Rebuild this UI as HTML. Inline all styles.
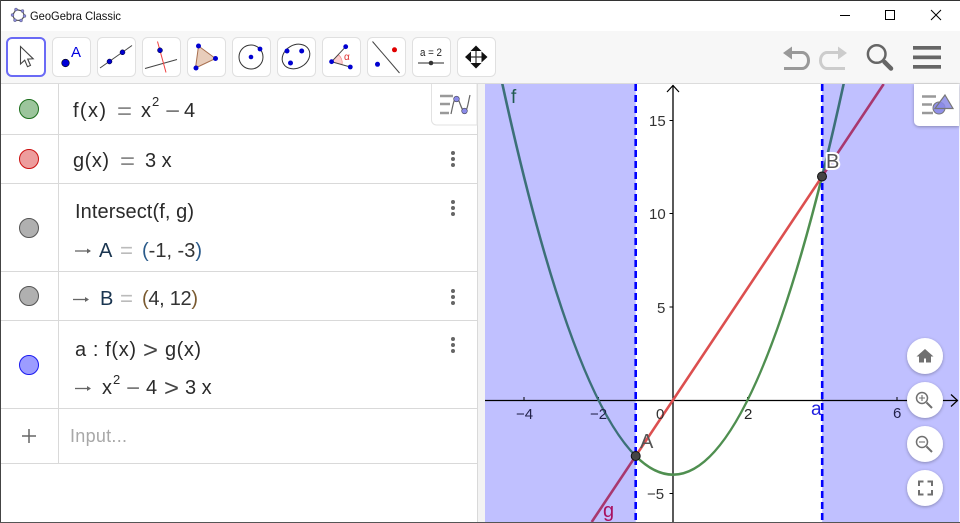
<!DOCTYPE html>
<html><head><meta charset="utf-8"><style>
html,body{margin:0;padding:0;background:#fff;width:960px;height:523px;overflow:hidden}
svg{display:block;position:absolute;left:0;top:0;overflow:hidden}
text{font-family:"Liberation Sans",sans-serif}
.m{font-size:20px;fill:#2a2a2a}
</style></head><body>
<svg width="960" height="523" viewBox="0 0 960 523" xmlns="http://www.w3.org/2000/svg">
<defs>
<clipPath id="in"><rect x="635.7" y="84" width="186.5" height="438"/></clipPath>
<clipPath id="out"><rect x="485" y="84" width="150.7" height="438"/><rect x="822.2" y="84" width="137" height="438"/></clipPath>
<filter id="sh" x="-30%" y="-30%" width="160%" height="160%"><feDropShadow dx="0" dy="1" stdDeviation="1.5" flood-color="#000" flood-opacity=".3"/></filter>
</defs>
<rect width="960" height="523" fill="#fff"/>
<!-- title bar -->
<path d="M16 9.500l6.500 1.500 2 5-3.500 4.500-6-.3-2.500-5z" fill="none" stroke="#555" stroke-width="1.200"/>
<g fill="#8a8ad8" stroke="#446" stroke-width=".4"><circle cx="16" cy="9.500" r="1.500"/><circle cx="22.500" cy="11" r="1.500"/><circle cx="24.500" cy="16" r="1.500"/><circle cx="21" cy="20.500" r="1.500"/><circle cx="15" cy="20.200" r="1.500"/><circle cx="12.500" cy="15" r="1.500"/></g>
<text x="30" y="20" font-size="12" fill="#111" textLength="91" lengthAdjust="spacingAndGlyphs">GeoGebra Classic</text>
<path d="M840 15.500h10" stroke="#000"/>
<rect x="885.500" y="10.500" width="9" height="9" fill="none" stroke="#000"/>
<path d="M931 10l10 10M941 10l-10 10" stroke="#000" fill="none"/>
<!-- toolbar -->
<rect x="0" y="31" width="960" height="52" fill="#f7f7f7"/>
<rect x="0" y="83" width="960" height="1" fill="#dcdcdc"/>
<g fill="#fff" stroke="#e0e0e0">
<rect x="52.500" y="37.500" width="38" height="39" rx="5"/><rect x="97.500" y="37.500" width="38" height="39" rx="5"/><rect x="142.500" y="37.500" width="38" height="39" rx="5"/><rect x="187.500" y="37.500" width="38" height="39" rx="5"/><rect x="232.500" y="37.500" width="38" height="39" rx="5"/><rect x="277.500" y="37.500" width="38" height="39" rx="5"/><rect x="322.500" y="37.500" width="38" height="39" rx="5"/><rect x="367.500" y="37.500" width="38" height="39" rx="5"/><rect x="412.500" y="37.500" width="38" height="39" rx="5"/><rect x="457.500" y="37.500" width="38" height="39" rx="5"/>
</g>
<rect x="7" y="38" width="38" height="38" rx="5" fill="#fff" stroke="#6a6af5" stroke-width="2"/>
<path d="M20.500 46.500v17.500l4.200-3.800 2.800 6.500 3-1.300-2.800-6.300 5.500-.3z" fill="#fff" stroke="#444" stroke-width="1.100"/>
<circle cx="65.500" cy="63" r="3.800" fill="#0000d8" stroke="#000" stroke-width=".6"/>
<text x="71" y="57" font-size="15" fill="#0000e0">A</text>
<path d="M100 68l32-22.500" stroke="#444" stroke-width="1"/><circle cx="109.500" cy="61.500" r="2.500" fill="#0000d0" stroke="#002" stroke-width=".5"/><circle cx="122.500" cy="52.300" r="2.500" fill="#0000d0" stroke="#002" stroke-width=".5"/>
<path d="M145 68.500l32-9" stroke="#444" stroke-width="1"/><path d="M157.500 41.500l8.500 31" stroke="#f04040" stroke-width="1"/><circle cx="160" cy="50.300" r="2.500" fill="#0000d0" stroke="#002" stroke-width=".5"/>
<path d="M198.500 46l17 12.500-20 9.500z" fill="#e8cdbb" stroke="#a87050" stroke-width="1"/><circle cx="198.500" cy="46" r="2.500" fill="#0000d0"/><circle cx="215.500" cy="58.500" r="2.500" fill="#0000d0"/><circle cx="196" cy="68" r="2.500" fill="#0000d0"/>
<circle cx="251" cy="57" r="12" fill="none" stroke="#333" stroke-width="1"/><circle cx="251" cy="57" r="2.300" fill="#0000d0"/><circle cx="260" cy="49" r="2.400" fill="#0000d0"/>
<ellipse cx="296" cy="56.500" rx="14.500" ry="11.500" transform="rotate(-30 296 56.500)" fill="none" stroke="#333" stroke-width="1"/><circle cx="287" cy="51" r="2.500" fill="#0000d0"/><circle cx="301.700" cy="51" r="2.500" fill="#0000d0"/><circle cx="290.500" cy="63" r="2.500" fill="#0000d0"/>
<path d="M331.600 61.700L338.500 54.800A10 10 0 0 1 342 64.600z" fill="#fcd0d0" stroke="#f08080" stroke-width=".7"/>
<path d="M345.700 46.700L331.600 61.700 350.300 67" fill="none" stroke="#444" stroke-width="1"/>
<circle cx="345.700" cy="46.700" r="2.400" fill="#0000d0"/><circle cx="331.600" cy="61.700" r="2.400" fill="#0000d0"/><circle cx="350.300" cy="67" r="2.400" fill="#0000d0"/><text x="344" y="60" font-size="10" fill="#e03030">α</text>
<path d="M372.500 41.500l27 31.500" stroke="#444" stroke-width="1"/><circle cx="394.500" cy="49.800" r="2.500" fill="#e00000"/><circle cx="377.500" cy="64.300" r="2.500" fill="#0000d0"/>
<text x="420" y="56" font-size="11" fill="#222" textLength="22" lengthAdjust="spacingAndGlyphs">a = 2</text><path d="M418 63h26" stroke="#555" stroke-width="1.300"/><circle cx="431" cy="63" r="2.300" fill="#333"/>
<path d="M476 47v20M466.500 57h20" stroke="#333" stroke-width="1.200"/><path d="M476 45.500l-5.500 5.500h11zM476 68.500l-5.500-5.500h11zM465 57l6-5.500v11zM487.500 57l-6-5.500v11z" fill="#111"/>
<!-- undo redo search menu -->
<path d="M788 52.500h14a6.500 8 0 0 1 0 16h-18" fill="none" stroke="#999" stroke-width="3"/><path d="M783 53l9-6.500v13z" fill="#999"/>
<path d="M842 52.500h-15a6.500 8 0 0 0 0 16h18" fill="none" stroke="#ccc" stroke-width="3"/><path d="M847 53l-9-6.500v13z" fill="#ccc"/>
<circle cx="876.700" cy="54" r="8.800" fill="none" stroke="#666" stroke-width="2.500"/><path d="M884.500 62l6.500 6.500" stroke="#666" stroke-width="4.500" stroke-linecap="round"/>
<rect x="913" y="46" width="28" height="3.700" fill="#666"/><rect x="913" y="55.500" width="28" height="3.700" fill="#666"/><rect x="913" y="65" width="28" height="3.700" fill="#666"/>
<!-- algebra -->
<g fill="#d9d9d9">
<rect x="1" y="134" width="476" height="1"/><rect x="1" y="183" width="476" height="1"/><rect x="1" y="271" width="476" height="1"/><rect x="1" y="320" width="476" height="1"/><rect x="1" y="408" width="476" height="1"/><rect x="1" y="463" width="476" height="1"/>
<rect x="58" y="84" width="1" height="380"/>
<rect x="477" y="84" width="1" height="438"/>
</g>
<rect x="478" y="84" width="7" height="438" fill="#f3f3f3"/>
<circle cx="29" cy="109" r="9.500" fill="#9cc59c" stroke="#1c6e1c"/>
<circle cx="29" cy="159" r="9.500" fill="#ed9d9d" stroke="#cc1010"/>
<circle cx="29" cy="228" r="9.500" fill="#b0b0b0" stroke="#555"/>
<circle cx="29" cy="296" r="9.500" fill="#b0b0b0" stroke="#555"/>
<circle cx="29" cy="365" r="9.500" fill="#9c9cff" stroke="#1a1af0"/>
<text class="m" x="73" y="117" textLength="33">f(x)</text><text x="117" y="119" font-size="24" fill="#888" textLength="15" lengthAdjust="spacingAndGlyphs">=</text><text class="m" x="141" y="117">x</text><text x="152" y="106" font-size="13" fill="#2a2a2a">2</text><text x="165" y="119" font-size="24" fill="#777" textLength="15" lengthAdjust="spacingAndGlyphs">−</text><text class="m" x="184" y="117">4</text>
<text class="m" x="73" y="167" textLength="36">g(x)</text><text x="120" y="169" font-size="24" fill="#888" textLength="15" lengthAdjust="spacingAndGlyphs">=</text><text class="m" x="145" y="167">3 x</text>
<text class="m" x="75" y="218" textLength="119">Intersect(f, g)</text>
<path d="M75 251h15" stroke="#666" stroke-width="1.300"/><path d="M91 251l-4-2.500v5z" fill="#666"/>
<text x="99" y="257" font-size="20" fill="#1a3550">A</text><text x="120" y="258" font-size="22" fill="#bbb" textLength="13" lengthAdjust="spacingAndGlyphs">=</text><text x="142" y="257" font-size="20" textLength="60"><tspan fill="#2a5a8a">(</tspan><tspan fill="#333">-1, -3</tspan><tspan fill="#2a5a8a">)</tspan></text>
<path d="M73 299.500h15" stroke="#666" stroke-width="1.300"/><path d="M89 299.500l-4-2.500v5z" fill="#666"/>
<text x="100" y="305" font-size="20" fill="#1a3550">B</text><text x="120" y="306" font-size="22" fill="#bbb" textLength="13" lengthAdjust="spacingAndGlyphs">=</text><text x="142" y="305" font-size="20" textLength="56"><tspan fill="#7a5a30">(</tspan><tspan fill="#333">4, 12</tspan><tspan fill="#7a5a30">)</tspan></text>
<text class="m" x="75" y="356" textLength="61">a : f(x)</text><text x="143" y="358" font-size="24" fill="#444" textLength="15" lengthAdjust="spacingAndGlyphs">&gt;</text><text class="m" x="165" y="356" textLength="36">g(x)</text>
<path d="M75 388.500h15" stroke="#666" stroke-width="1.300"/><path d="M91 388.500l-4-2.500v5z" fill="#666"/>
<text class="m" x="102" y="394">x</text><text x="113" y="384" font-size="13" fill="#2a2a2a">2</text><text x="126" y="396" font-size="24" fill="#777" textLength="14" lengthAdjust="spacingAndGlyphs">−</text><text class="m" x="146" y="394">4</text><text x="164" y="396" font-size="24" fill="#444" textLength="15" lengthAdjust="spacingAndGlyphs">&gt;</text><text class="m" x="185" y="394">3 x</text>
<path d="M22 436h14M29 429v14" stroke="#666" stroke-width="1.500"/>
<text x="70" y="442" font-size="18" fill="#a8a8a8" textLength="57">Input...</text>
<g fill="#666"><circle cx="453" cy="153" r="2"/><circle cx="453" cy="159" r="2"/><circle cx="453" cy="165" r="2"/><circle cx="453" cy="202" r="2"/><circle cx="453" cy="208" r="2"/><circle cx="453" cy="214" r="2"/><circle cx="453" cy="291" r="2"/><circle cx="453" cy="297" r="2"/><circle cx="453" cy="303" r="2"/><circle cx="453" cy="339" r="2"/><circle cx="453" cy="345" r="2"/><circle cx="453" cy="351" r="2"/></g>
<!-- algebra stylebar -->
<path d="M431.500 84v36a5 5 0 0 0 5 5H477V84" fill="#fff" stroke="#e2e2e2"/>
<path d="M440 96h13M440 104h10M440 113h9" stroke="#999" stroke-width="2.500"/>
<path d="M451 114C453 105 454 98 456.500 98 459.500 98 461 111 464.500 111 467.500 111 468 103 470 95" fill="none" stroke="#666" stroke-width="1.200"/>
<circle cx="456.500" cy="99" r="2.800" fill="#8a8ae8" stroke="#445" stroke-width=".6"/><circle cx="464.500" cy="111" r="2.800" fill="#8a8ae8" stroke="#445" stroke-width=".6"/>
<!-- graphics -->
<rect x="485" y="84" width="474" height="438" fill="#fff"/>
<rect x="485" y="84" width="150.700" height="438" fill="#c0c0ff"/>
<rect x="822.200" y="84" width="137" height="438" fill="#c0c0ff"/>
<!-- axes -->
<path d="M485 400.500H958M673 85V522" stroke="#000" stroke-width="1.300" fill="none"/>
<path d="M524 397v3.500M598.500 397v3.500M747.500 397v3.500M822 397v3.500M897 397v3.500M669.500 120.500h3.500M669.500 213.500h3.500M669.500 307h3.500M669.500 493.500h3.500" stroke="#000" stroke-width="1"/>
<!-- curves -->
<g clip-path="url(#in)"><path d="M486.500 8Q673 941.400 859.500 8" fill="none" stroke="#4f8f50" stroke-width="2.600"/><path d="M591.700 522L883.700 84" fill="none" stroke="#dc4f4f" stroke-width="2.600"/></g>
<g clip-path="url(#out)"><path d="M486.500 8Q673 941.400 859.500 8" fill="none" stroke="#3c7078" stroke-width="2.600"/><path d="M591.700 522L883.700 84" fill="none" stroke="#a8386f" stroke-width="2.600"/></g>
<path d="M635.700 84V522M822.200 84V522" stroke="#0000ff" stroke-width="2.600" stroke-dasharray="7 4" fill="none"/>
<path d="M667 92l6-6.500 6 6.500M951 394.500l6.500 6-6.500 6" fill="none" stroke="#000" stroke-width="1.200"/>
<g font-size="15" fill="#22224a">
<text x="516" y="419">−4</text><text x="590" y="419">−2</text><text x="656" y="419" fill="#333">0</text><text x="744" y="419" fill="#222">2</text><text x="893" y="418">6</text>
<text x="649" y="126" fill="#333">15</text><text x="649" y="219" fill="#333">10</text><text x="657" y="313" fill="#333">5</text><text x="647" y="499" fill="#333">−5</text>
</g>
<text x="511" y="103" font-size="19" fill="#1f5a50">f</text>
<text x="603" y="517" font-size="20" fill="#a81060">g</text>
<text x="811" y="415" font-size="19" fill="#2020e0">a</text>
<text x="640" y="448" font-size="20" fill="#555">A</text>
<text x="826" y="168" font-size="20" fill="#555" stroke="#fff" stroke-width="4" paint-order="stroke" stroke-linejoin="round">B</text>
<circle cx="635.700" cy="456" r="4.500" fill="#444" stroke="#111" stroke-width="1"/>
<circle cx="822" cy="176.500" r="4.500" fill="#444" stroke="#111" stroke-width="1"/>
<!-- graphics stylebar -->
<path d="M914 84v37a5 5 0 0 0 5 5H959V84z" fill="#fff" filter="url(#sh)"/>
<path d="M922 96.500h14M922 104.500h10M922 113h11" stroke="#999" stroke-width="2.500"/>
<circle cx="939" cy="108" r="6" fill="#9090e8" stroke="#777"/><path d="M945 95l8 13.500h-18z" fill="#8a8ae8" fill-opacity=".85" stroke="#777" stroke-width="1.200"/>
<!-- zoom buttons -->
<g fill="#fff" filter="url(#sh)"><circle cx="925" cy="356" r="18"/><circle cx="925" cy="400" r="18"/><circle cx="925" cy="444" r="18"/><circle cx="925" cy="488" r="18"/></g>
<path d="M925 349l-8.500 7.500h2.500v6h5v-4h2v4h5v-6h2.500z" fill="#707070"/>
<circle cx="922" cy="398" r="5.500" fill="none" stroke="#707070" stroke-width="1.500"/><path d="M926.500 402.500l5.500 5.500" stroke="#707070" stroke-width="2"/><path d="M919 398h6M922 395v6" stroke="#707070" stroke-width="1.100"/>
<circle cx="922" cy="442" r="5.500" fill="none" stroke="#707070" stroke-width="1.500"/><path d="M926.500 446.500l5.500 5.500" stroke="#707070" stroke-width="2"/><path d="M919 442h6" stroke="#707070" stroke-width="1.100"/>
<path d="M919 486v-4.500h4.500M927.500 481.500h4.500v4.500M932 490v4.500h-4.500M923.500 494.500h-4.500v-4.500" fill="none" stroke="#707070" stroke-width="2"/>
<!-- window border -->
<rect x="0" y="0" width="960" height="1" fill="#333"/>
<rect x="0" y="0" width="1" height="523" fill="#444"/>
<rect x="0" y="522" width="960" height="1" fill="#555"/>
</svg>
</body></html>
